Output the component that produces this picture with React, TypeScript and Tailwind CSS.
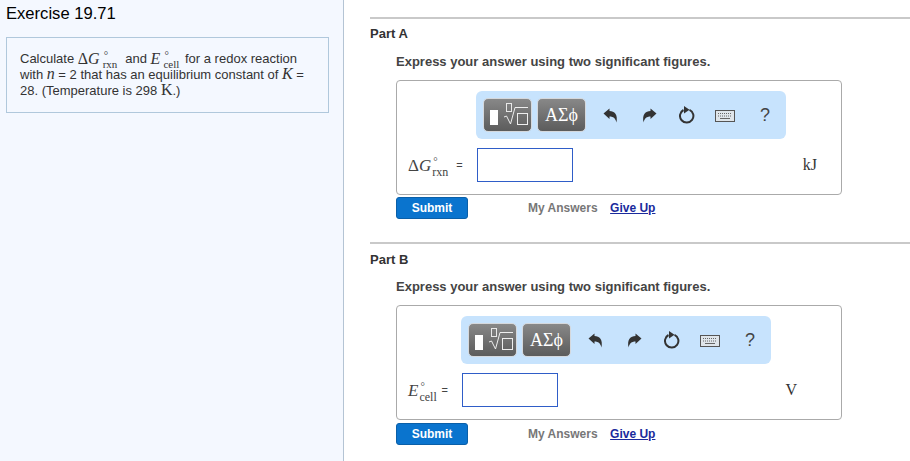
import type { ReactNode } from 'react';

const sans = { fontFamily: '"Liberation Sans", Arial, sans-serif' };

function Sub({ sym, sub, big, slot }: { sym: ReactNode; sub: string; big?: boolean; slot: string }) {
  return (
    <span className={`inline-flex items-start font-['Liberation_Serif',serif] ${big ? 'text-[17px]' : 'text-[16px]'} leading-none align-[-1px]`}>
      {sym}
      <span className={`relative inline-block ${slot}`}>
        <span className={`absolute ${big ? 'left-[2px]' : 'left-[4px]'} top-[-1px] text-[11px] leading-none`}>°</span>
        <span className={`absolute ${big ? 'left-[1px] top-[9px] text-[12px]' : 'left-[3px] top-[8px] text-[11px]'} leading-none`}>{sub}</span>
      </span>
    </span>
  );
}

const DeltaG = ({ big }: { big?: boolean }) => (
  <Sub big={big} slot={big ? 'w-[20px]' : 'w-[22px]'} sub="rxn" sym={<span>Δ<i>G</i></span>} />
);
const Ecell = ({ big }: { big?: boolean }) => (
  <Sub big={big} slot={big ? 'w-[18px]' : 'w-[21px]'} sub="cell" sym={<i>E</i>} />
);

function Arrow({ flip }: { flip?: boolean }) {
  return (
    <svg width="15" height="15" viewBox="0 0 15 15" className={flip ? '-scale-x-100' : ''}>
      <path d="M0.5 5.5 L6.5 0.5 V3 C11.5 3 15 6.5 13.5 14.5 C12.5 10.5 10.5 8.5 6.5 8.5 V11 Z" fill="#333" />
    </svg>
  );
}

function Toolbar({ offset }: { offset: string }) {
  return (
    <div className={`${offset} w-[310px] h-[48px] rounded-[6px] bg-[#c7e3fd] flex items-center pl-[7px]`}>
      <button className="w-[49px] h-[34px] rounded-[5px] border border-[#d5d8dc] bg-gradient-to-b from-[#888888] to-[#5c5c5c] flex items-center justify-center">
        <svg width="47" height="32" viewBox="0 0 47 32" fill="none">
          <rect x="6" y="11" width="8" height="15" fill="#fff" />
          <rect x="22.5" y="4.5" width="5" height="8" stroke="#e8e8e8" />
          <path d="M20 18 L22.5 17 L26.5 25 L31 8.5 H44" stroke="#eee" />
          <rect x="33.5" y="14.5" width="10" height="11" stroke="#eee" />
        </svg>
      </button>
      <button className="ml-[5px] w-[49px] h-[34px] rounded-[5px] border border-[#d5d8dc] bg-gradient-to-b from-[#888888] to-[#5c5c5c] text-white text-[18px] leading-none font-['Liberation_Serif',serif]">
        ΑΣϕ
      </button>
      <div className="ml-[17px]"><Arrow /></div>
      <div className="ml-[24px]"><Arrow flip /></div>
      <svg className="ml-[22px]" width="16" height="18" viewBox="0 0 16 18" fill="none">
        <path d="M10.5 3.8 A6.7 6.7 0 1 1 4.5 4" stroke="#333" strokeWidth="2" />
        <path d="M5 0 L10.5 3.8 L5 7.5 Z" fill="#333" />
      </svg>
      <svg className="ml-[20px] mt-[2px]" width="20" height="12" viewBox="0 0 20 12" fill="none">
        <rect x="0.5" y="0.5" width="19" height="11" fill="#dfe5ea" stroke="#555" />
        <path d="M3 3.5 H17 M3 6 H17" stroke="#666" strokeDasharray="1 1" />
        <path d="M5 8.5 H15" stroke="#666" />
      </svg>
      <span className="ml-[25px] text-[18px] leading-none text-[#444]">?</span>
    </div>
  );
}

type PartProps = {
  title: string;
  label: ReactNode;
  unit: string;
  offset: string;
  top: string;
  titleGap: string;
  promptGap: string;
  unitPad: string;
  submitGap: string;
};

function Part({ title, label, unit, offset, top, titleGap, promptGap, unitPad, submitGap }: PartProps) {
  return (
    <section className={top}>
      <div className="border-t-2 border-[#c9c9c9]" />
      <h3 className={`${titleGap} text-[13px] leading-[16px] font-bold text-[#333]`}>{title}</h3>
      <div className="pl-[26px]">
        <p className={`${promptGap} text-[13px] leading-[16px] font-bold text-[#444]`}>Express your answer using two significant figures.</p>
        <div className="mt-[10px] w-[446px] h-[115px] border border-[#aaa] rounded-[4px] pt-[10px] pb-[11px]">
          <Toolbar offset={offset} />
          <div className={`mt-[9px] flex items-center pl-[11px] ${unitPad}`}>
            <div className="flex items-center gap-[5px] mr-[14px] text-[#444]">
              {label}
              <span className="text-[11px]">=</span>
            </div>
            <div className="w-[96px] h-[34px] border border-[#2f5dc8] bg-white" />
            <span className="ml-auto font-['Liberation_Serif',serif] text-[16px] text-[#333]">{unit}</span>
          </div>
        </div>
        <div className={`${submitGap} flex items-center`}>
          <button className="w-[72px] h-[22px] rounded-[3px] bg-[#0a74ce] border border-[#0a5fa8] text-white text-[12px] font-bold">Submit</button>
          <span className="ml-[60px] text-[12px] font-bold text-[#777]">My Answers</span>
          <a className="ml-[12.5px] text-[12px] font-bold text-[#1a2a9c] underline">Give Up</a>
        </div>
      </div>
    </section>
  );
}

export default function App() {
  return (
    <div style={sans} className="w-[910px] h-[461px] overflow-hidden flex bg-white">
      <aside className="w-[344px] shrink-0 h-full bg-[#f4f8ff] border-r border-[#b4c4d4] pl-[6px] pr-[14px] pt-[5px]">
        <h2 className="text-[16.6px] leading-[18px] text-black">Exercise 19.71</h2>
        <div className="mt-[14px] h-[76px] border border-[#b0c8dc] px-[13px] pt-[13px] text-[13px] leading-[16px] text-[#333]">
          <p className="h-[15px]">
            Calculate <DeltaG /> and <Ecell /> for a redox reaction
          </p>
          <p className="h-[16px]">
            with <i className="font-['Liberation_Serif',serif] text-[16px] leading-none">n</i> = 2 that has an equilibrium constant of <i className="font-['Liberation_Serif',serif] text-[16px] leading-none">K</i> =
          </p>
          <p className="h-[16px]">
            28. (Temperature is 298 <span className="font-['Liberation_Serif',serif] text-[16px] leading-none">K</span>.)
          </p>
        </div>
      </aside>
      <main className="flex-1 pl-[26px] pt-[17px]">
        <Part title="Part A" label={<DeltaG big />} unit="kJ" offset="ml-[79px]" top="" titleGap="mt-[7px]" promptGap="mt-[12px]" unitPad="pr-[24px]" submitGap="mt-[2px]" />
        <Part title="Part B" label={<Ecell big />} unit="V" offset="ml-[64px]" top="mt-[23px]" titleGap="mt-[8px]" promptGap="mt-[11px]" unitPad="pr-[44px]" submitGap="mt-[3px]" />
      </main>
    </div>
  );
}
